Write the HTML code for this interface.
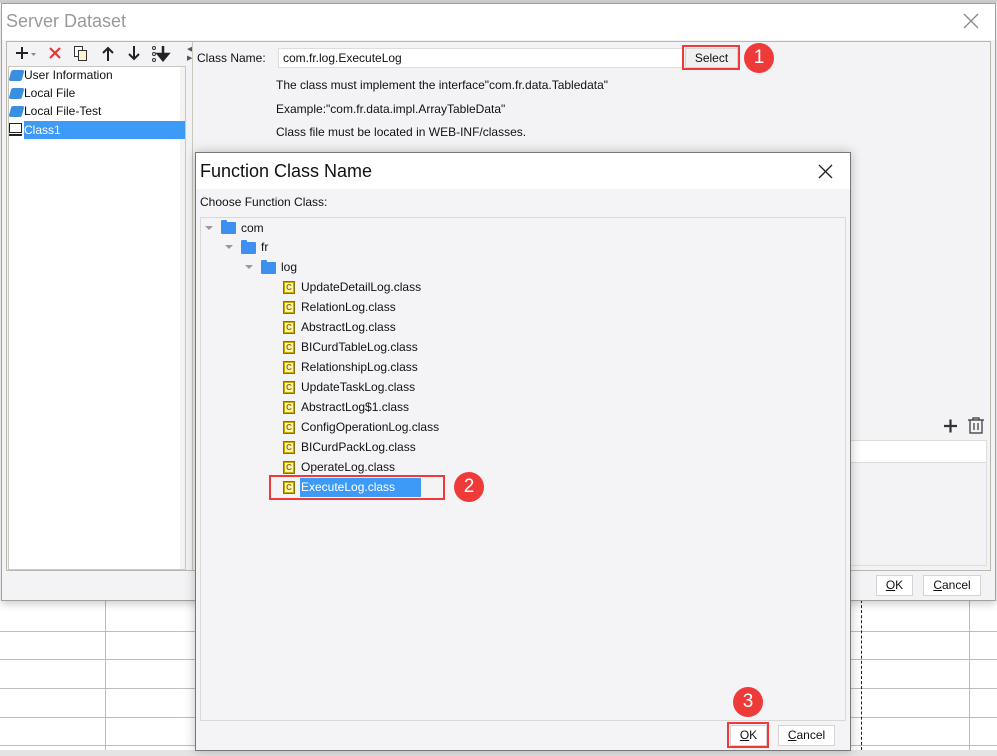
<!DOCTYPE html>
<html><head><meta charset="utf-8"><style>
*{margin:0;padding:0;box-sizing:border-box}
body{width:997px;height:756px;position:relative;overflow:hidden;background:#fff;font-family:"Liberation Sans",Arial,sans-serif;font-size:12px;color:#111}
.a{position:absolute}
.hl{position:absolute;height:1px;background:#bcbcbc}
.vl{position:absolute;width:1px;background:#bcbcbc}
.btn{position:absolute;background:#fff;border:1px solid #d4d4d4;text-align:center;font-size:12px}
.badge{position:absolute;width:30px;height:30px;border-radius:50%;background:#ef3a3a;color:#fff;font-size:19px;text-align:center;line-height:30px}
.row{position:absolute;height:20px;line-height:20px;font-size:12px;white-space:nowrap}
.ci{position:absolute;width:12px;height:13px;background:#c9a800;border:1px solid #8a7200}
.ci:after{content:"C";position:absolute;left:1px;top:0;width:8px;height:9px;margin-top:1px;background:#fff7b0;color:#8a7200;font-size:8px;line-height:9px;text-align:center;font-weight:bold}
.fold{position:absolute;width:15px;height:12px;background:#3d8ff0;border-radius:1px}
.fold:before{content:"";position:absolute;left:0;top:-2px;width:6px;height:3px;background:#3d8ff0;border-radius:1px 1px 0 0}
.arr{position:absolute;width:0;height:0;border-left:4px solid transparent;border-right:4px solid transparent;border-top:4px solid #999}
.dsi{position:absolute;width:13px;height:11px;background:#3a8fe0;transform:skewX(-15deg);border-radius:2px}
</style></head><body>
<div class="a" style="left:0;top:0;width:997px;height:3px;background:#d0d0d0"></div>
<div class="hl" style="left:0;top:631px;width:997px"></div>
<div class="hl" style="left:0;top:659px;width:997px"></div>
<div class="hl" style="left:0;top:688px;width:997px"></div>
<div class="hl" style="left:0;top:717px;width:997px"></div>
<div class="hl" style="left:0;top:745px;width:997px"></div>
<div class="vl" style="left:105px;top:600px;height:150px"></div>
<div class="vl" style="left:969px;top:600px;height:150px"></div>
<div class="a" style="left:861px;top:600px;height:150px;border-left:1px dashed #222"></div>
<div class="a" style="left:0;top:750px;width:997px;height:6px;background:#e4e4e4"></div>

<div class="a" style="left:1px;top:3px;width:995px;height:598px;background:#f3f3f5;border:1px solid #a0a0a0;box-shadow:0 3px 8px rgba(0,0,0,.2)"></div>
<div class="a" style="left:2px;top:4px;width:993px;height:36px;background:#fff"></div>
<div class="a" style="left:6px;top:11px;font-size:18px;color:#999">Server Dataset</div>
<svg class="a" style="left:963px;top:13px" width="16" height="16"><path d="M1 1L15 15M15 1L1 15" stroke="#888" stroke-width="1.3"/></svg>
<div class="a" style="left:6px;top:41px;width:985px;height:530px;border:1px solid #b8b8b0"></div>
<svg class="a" style="left:12px;top:44px" width="180" height="20">
<path d="M4 9H16M10 3V15" stroke="#222" stroke-width="2"/><path d="M19 9l2.5 3 2.5-3z" fill="#888"/>
<path d="M38 4L48 14M48 4L38 14" stroke="#e53935" stroke-width="2.2"/>
<rect x="62.5" y="2.5" width="8" height="10" fill="#fff" stroke="#333"/><rect x="66.5" y="6.5" width="8" height="10" fill="#fff3d0" stroke="#333"/>
<path d="M96 17V4M91 9l5-5 5 5" stroke="#222" stroke-width="2" fill="none"/>
<path d="M122 2V15M117 10l5 5 5-5" stroke="#222" stroke-width="2" fill="none"/>
<circle cx="142" cy="4" r="1.5" fill="none" stroke="#333"/><circle cx="142" cy="10" r="1.5" fill="none" stroke="#333"/><circle cx="142" cy="16" r="1.5" fill="none" stroke="#333"/>
<path d="M151 2V14M146 10l5 6 5-6z" stroke="#222" stroke-width="2.5" fill="#222"/>
</svg>
<div class="a" style="left:8px;top:66px;width:178px;height:504px;background:#fff;border:1px solid #c8c8c0"></div>
<div class="a" style="left:180px;top:67px;width:5px;height:502px;background:#f2f2f2"></div>
<div class="dsi" style="left:10px;top:70px"></div><div class="a" style="left:24px;top:68px">User Information</div>
<div class="dsi" style="left:10px;top:88px"></div><div class="a" style="left:24px;top:86px">Local File</div>
<div class="dsi" style="left:10px;top:106px"></div><div class="a" style="left:24px;top:104px">Local File-Test</div>
<div class="a" style="left:9px;top:123px;width:13px;height:10px;border:1px solid #222"></div><div class="a" style="left:9px;top:134px;width:13px;height:2px;background:#222"></div>
<div class="a" style="left:24px;top:121px;width:161px;height:18px;background:#3d9bf7;color:#fff;line-height:18px">Class1</div>
<div class="a" style="left:187px;top:45px;font-size:7px;color:#555;line-height:9px">◀<br>▶</div>
<div class="vl" style="left:192px;top:42px;height:528px;background:#c8c8c0"></div>
<div class="a" style="left:197px;top:51px">Class Name:</div>
<div class="a" style="left:278px;top:48px;width:405px;height:20px;background:#fff;border:1px solid #ddd;line-height:18px;padding-left:4px">com.fr.log.ExecuteLog</div>
<div class="btn" style="left:685px;top:48px;width:53px;height:20px;background:#f0f0f0;line-height:18px">Select</div>
<div class="a" style="left:682px;top:45px;width:58px;height:25px;border:2px solid #ef3a3a"></div>
<div class="badge" style="left:744px;top:43px">1</div>
<div class="a" style="left:276px;top:78px">The class must implement the interface"com.fr.data.Tabledata"</div>
<div class="a" style="left:276px;top:102px">Example:"com.fr.data.impl.ArrayTableData"</div>
<div class="a" style="left:276px;top:125px">Class file must be located in WEB-INF/classes.</div>
<svg class="a" style="left:940px;top:416px" width="48" height="20">
<path d="M4 10H17M10.5 3.5V16.5" stroke="#333" stroke-width="2.2"/>
<path d="M28 4H44M33 4V2H39V4M30 4V17H42V4M34 7V14M38 7V14" stroke="#333" stroke-width="1.2" fill="none"/>
</svg>
<div class="a" style="left:850px;top:441px;width:136px;height:22px;background:#fff;border-bottom:1px solid #ddd"></div>
<div class="a" style="left:850px;top:440px;width:137px;height:126px;border:1px solid #ddd"></div>
<div class="btn" style="left:876px;top:575px;width:37px;height:21px;line-height:19px"><u>O</u>K</div>
<div class="btn" style="left:923px;top:575px;width:58px;height:21px;line-height:19px"><u>C</u>ancel</div>

<div class="a" style="left:195px;top:152px;width:656px;height:599px;background:#f4f4f6;border:1px solid #777;box-shadow:0 0 10px rgba(0,0,0,.25)"></div>
<div class="a" style="left:196px;top:153px;width:654px;height:36px;background:#fff"></div>
<div class="a" style="left:200px;top:161px;font-size:18px;color:#111">Function Class Name</div>
<svg class="a" style="left:818px;top:164px" width="15" height="15"><path d="M1 1L14 14M14 1L1 14" stroke="#222" stroke-width="1.3"/></svg>
<div class="a" style="left:200px;top:195px">Choose Function Class:</div>
<div class="a" style="left:200px;top:217px;width:646px;height:504px;border:1px solid #d8d8d8"></div>
<div class="arr" style="left:205px;top:226px"></div><div class="fold" style="left:221px;top:222px"></div><div class="row" style="left:241px;top:218px">com</div>
<div class="arr" style="left:225px;top:245px"></div><div class="fold" style="left:241px;top:242px"></div><div class="row" style="left:261px;top:237px">fr</div>
<div class="arr" style="left:245px;top:265px"></div><div class="fold" style="left:261px;top:262px"></div><div class="row" style="left:281px;top:257px">log</div>
<div class="ci" style="left:283px;top:281px"></div><div class="row" style="left:301px;top:277px">UpdateDetailLog.class</div>
<div class="ci" style="left:283px;top:301px"></div><div class="row" style="left:301px;top:297px">RelationLog.class</div>
<div class="ci" style="left:283px;top:321px"></div><div class="row" style="left:301px;top:317px">AbstractLog.class</div>
<div class="ci" style="left:283px;top:341px"></div><div class="row" style="left:301px;top:337px">BICurdTableLog.class</div>
<div class="ci" style="left:283px;top:361px"></div><div class="row" style="left:301px;top:357px">RelationshipLog.class</div>
<div class="ci" style="left:283px;top:381px"></div><div class="row" style="left:301px;top:377px">UpdateTaskLog.class</div>
<div class="ci" style="left:283px;top:401px"></div><div class="row" style="left:301px;top:397px">AbstractLog$1.class</div>
<div class="ci" style="left:283px;top:421px"></div><div class="row" style="left:301px;top:417px">ConfigOperationLog.class</div>
<div class="ci" style="left:283px;top:441px"></div><div class="row" style="left:301px;top:437px">BICurdPackLog.class</div>
<div class="ci" style="left:283px;top:461px"></div><div class="row" style="left:301px;top:457px">OperateLog.class</div>
<div class="ci" style="left:283px;top:481px"></div>
<div class="row" style="left:300px;top:478px;width:121px;height:19px;line-height:19px;background:#3d9bf7;color:#fff;padding-left:1px">ExecuteLog.class</div>
<div class="a" style="left:269px;top:475px;width:176px;height:25px;border:2px solid #ef3a3a"></div>
<div class="badge" style="left:454px;top:472px">2</div>
<div class="badge" style="left:733px;top:687px">3</div>
<div class="btn" style="left:730px;top:725px;width:37px;height:21px;line-height:19px"><u>O</u>K</div>
<div class="a" style="left:727px;top:722px;width:42px;height:26px;border:2px solid #ef3a3a"></div>
<div class="btn" style="left:778px;top:725px;width:57px;height:21px;line-height:19px"><u>C</u>ancel</div>
</body></html>
